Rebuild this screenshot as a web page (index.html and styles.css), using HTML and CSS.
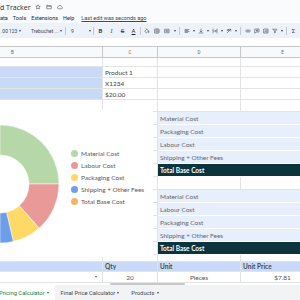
FILE: index.html
```html
<!DOCTYPE html>
<html lang="en">
<head>
<meta charset="utf-8">
<title>Tracker</title>
<link rel="stylesheet" href="styles.css">
</head>
<body>
<div class="app">
  <header class="chrome">
    <div class="titlebar">
      <span class="title">d Tracker</span>
      <svg class="ti" viewBox="0 0 24 24"><path d="M12 3l2.7 5.8 6.3.7-4.7 4.3 1.3 6.3L12 16.9 6.4 20.1l1.3-6.3L3 9.5l6.3-.7z"/></svg>
      <svg class="ti" viewBox="0 0 24 24"><path d="M3 5h6l2 2h10v12H3z M3 9h18"/></svg>
      <svg class="ti" viewBox="0 0 24 24"><path d="M7 19h10.5a4 4 0 0 0 .5-8 6.5 6.5 0 0 0-12.3-1.5A4.8 4.8 0 0 0 7 19z"/></svg>
    </div>
    <nav class="menubar">
      <span>ata</span><span>Tools</span><span>Extensions</span><span>Help</span><span class="lastedit">Last edit was seconds ago</span>
    </nav>
    <div class="toolbar">
      <span class="ic txt">.00</span>
      <span class="numfmt">123<i class="car"></i></span>
      <span class="fontname">Trebuchet ...</span><span class="dd"><i class="car"></i></span>
      <span class="sep"></span>
      <span class="ic txt">9</span><span class="dd gap"><i class="car"></i></span>
      <span class="sep tight"></span>
      <span class="ic fmt b">B</span><span class="ic fmt it">I</span><span class="ic fmt st">S</span><span class="ic fmt ac">A</span>
      <span class="sep tight"></span>
      <span class="ic w10"><svg viewBox="0 0 24 24"><path d="M4 12l7-7 7 7-7 7z M11 5L8 2 M19 14c1.5 2.5 1.5 4 0 4s-1.5-1.5 0-4z"/></svg></span>
      <span class="ic w10"><svg viewBox="0 0 24 24"><path d="M4 4h16v16H4z M12 4v16 M4 12h16"/></svg></span>
      <span class="ic w10"><svg viewBox="0 0 24 24"><path d="M4 5h16v14H4z M7 12h10 M9 10l-2 2 2 2 M15 10l2 2-2 2"/></svg></span><span class="dd"><i class="car"></i></span>
      <span class="sep"></span>
      <span class="ic"><svg viewBox="0 0 24 24"><path d="M4 6h16 M4 10h11 M4 14h16 M4 18h11"/></svg></span><span class="dd"><i class="car"></i></span>
      <span class="ic"><svg viewBox="0 0 24 24"><path d="M4 20h16 M12 4v12 M8 12l4 4 4-4"/></svg></span><span class="dd"><i class="car"></i></span>
      <span class="ic"><svg viewBox="0 0 24 24"><path d="M4 4v16 M20 4v16 M7 12h10 M14 9l3 3-3 3"/></svg></span><span class="dd"><i class="car"></i></span>
      <span class="ic"><svg viewBox="0 0 24 24"><path d="M5 19L19 5 M12 5h7v7 M5 11l4-7 4 7 M6.5 8.5h5"/></svg></span><span class="dd"><i class="car"></i></span>
      <span class="sep"></span>
      <span class="ic"><svg viewBox="0 0 24 24"><path d="M9 12h6 M10 8H7a4 4 0 0 0 0 8h3 M14 8h3a4 4 0 0 1 0 8h-3"/></svg></span>
      <span class="ic"><svg viewBox="0 0 24 24"><path d="M4 4h16v12H8l-4 4z M12 7v6 M9 10h6"/></svg></span>
      <span class="ic"><svg viewBox="0 0 24 24"><path d="M4 4h16v16H4z M8 16v-4 M12 16V8 M16 16v-6"/></svg></span>
      <span class="ic"><svg viewBox="0 0 24 24"><path d="M4 5h16l-6 7v6l-4 2v-8z"/></svg></span><span class="dd"><i class="car"></i></span>
      <span class="sep"></span>
      <span class="ic txt sigma">Σ</span>
    </div>
    <div class="formulabar"></div>
  </header>

  <main class="sheet">
    <div class="cols colheads"><span>B</span><span>C</span><span>D</span><span>E</span></div>

    <div class="cols row h9"><div class="c"></div><div class="c"></div><div class="c"></div><div class="c"></div></div>
    <div class="cols row h11"><div class="c blue"></div><div class="c">Product 1</div><div class="c"></div><div class="c"></div></div>
    <div class="cols row h11"><div class="c blue"></div><div class="c">X1234</div><div class="c"></div><div class="c"></div></div>
    <div class="cols row h11"><div class="c blue"></div><div class="c">$20.00</div><div class="c"></div><div class="c"></div></div>
    <div class="cols row h12"><div class="c"></div><div class="c"></div><div class="c"></div><div class="c"></div></div>

    <div class="cols row h13"><div class="c"></div><div class="c"></div><div class="c tbl">Material Cost</div></div>
    <div class="cols row h13"><div class="c"></div><div class="c"></div><div class="c tbl">Packaging Cost</div></div>
    <div class="cols row h13"><div class="c"></div><div class="c"></div><div class="c tbl">Labour Cost</div></div>
    <div class="cols row h13"><div class="c"></div><div class="c"></div><div class="c tbl">Shipping + Other Fees</div></div>
    <div class="cols row h13"><div class="c"></div><div class="c"></div><div class="c tbl tot">Total Base Cost</div></div>
    <div class="cols row h13"><div class="c"></div><div class="c"></div><div class="c"></div><div class="c"></div></div>
    <div class="cols row h13"><div class="c"></div><div class="c"></div><div class="c tbl">Material Cost</div></div>
    <div class="cols row h13"><div class="c"></div><div class="c"></div><div class="c tbl">Labour Cost</div></div>
    <div class="cols row h13"><div class="c"></div><div class="c"></div><div class="c tbl">Packaging Cost</div></div>
    <div class="cols row h13"><div class="c"></div><div class="c"></div><div class="c tbl">Shipping + Other Fees</div></div>
    <div class="cols row h13"><div class="c"></div><div class="c"></div><div class="c tbl tot">Total Base Cost</div></div>
    <div class="cols row h7"><div class="c"></div><div class="c"></div><div class="c"></div><div class="c"></div></div>

    <div class="cols row h10 hdr"><div class="c"></div><div class="c">Qty</div><div class="c">Unit</div><div class="c">Unit Price</div></div>
    <div class="cols row h11"><div class="c end"><i class="car dark"></i></div><div class="c ctr">20</div><div class="c ctr">Pieces</div><div class="c ctr">$7.81</div></div>

    <div class="chart">
      <svg class="donut" viewBox="-10 110 80 147">
        <path fill="#f6b26b" d="M0 243A59 59 0 0 1 0 125L0 155A29 29 0 0 0 0 213Z"/>
        <path fill="#b6d7a8" d="M0 125A59 59 0 0 1 59 184L29 184A29 29 0 0 0 0 155Z"/>
        <path fill="#ea9999" d="M59 184A59 59 0 0 1 39.1 228.2L19.2 205.7A29 29 0 0 0 29 184Z"/>
        <path fill="#ffd966" d="M39.1 228.2A59 59 0 0 1 13.3 241.5L6.5 212.3A29 29 0 0 0 19.2 205.7Z"/>
        <path fill="#6d9eeb" d="M13.3 241.5A59 59 0 0 1 0 243L0 213A29 29 0 0 0 6.5 212.3Z"/>
      </svg>
      <ul class="legend">
        <li><span class="dot green"></span>Material Cost</li>
        <li><span class="dot red"></span>Labour Cost</li>
        <li><span class="dot yellow"></span>Packaging Cost</li>
        <li><span class="dot blue-d"></span>Shipping + Other Fees</li>
        <li><span class="dot orange"></span>Total Base Cost</li>
      </ul>
    </div>
  </main>

  <div class="hscroll"><div class="thumb"></div></div>

  <footer class="tabs">
    <span class="tab active">Pricing Calculator <i class="car green-car"></i></span>
    <span class="tab">Final Price Calculator <i class="car"></i></span>
    <span class="tab">Products <i class="car"></i></span>
  </footer>
</div>
</body>
</html>
```

FILE: styles.css
```css
* { box-sizing: border-box; margin: 0; padding: 0; }
html, body { width: 300px; height: 300px; overflow: hidden; background: #fff; }
body { font-family: Roboto, "Liberation Sans", sans-serif; color: #1f1f1f; }

.app { width: 300px; height: 300px; display: flex; flex-direction: column; overflow: hidden; }

/* ---------- top chrome ---------- */
.chrome { background: #f9fbfd; flex: none; }
.titlebar { height: 13px; display: flex; align-items: center; padding-top: 1px; }
.title { font-family: "Open Sans", sans-serif; font-size: 7px; color: #1f1f1f; margin-right: 4px; white-space: nowrap; }
.ti { width: 6px; height: 6px; margin-right: 5px; fill: none; stroke: #444746; stroke-width: 2.2; stroke-linejoin: round; }

.menubar { height: 10px; display: flex; align-items: center; gap: 5px; font-size: 5.5px; color: #1f1f1f; white-space: nowrap; }
.lastedit { margin-left: 2px; color: #444746; text-decoration: underline; }

.toolbar { height: 15px; display: flex; align-items: center; background: #edf2fa; font-size: 5.5px; color: #444746; white-space: nowrap; }
.ic { width: 9px; height: 9px; display: flex; align-items: center; justify-content: center; flex: none; }
.ic svg { width: 6px; height: 6px; fill: none; stroke: #444746; stroke-width: 2.2; stroke-linejoin: round; stroke-linecap: round; }
.w10 { width: 10px; }
.txt { font-size: 5px; }
.sigma { font-size: 6px; }
.fmt { width: 11px; font-size: 6px; color: #444746; }
.b { font-weight: 700; }
.it { font-style: italic; font-family: "Liberation Serif", serif; }
.st { text-decoration: line-through; }
.ac { text-decoration: underline; text-decoration-thickness: 1px; color: #1f1f1f; }
.numfmt { width: 14px; display: flex; align-items: center; gap: 2px; font-size: 5px; flex: none; }
.fontname { width: 27px; margin-left: 8px; font-size: 5px; flex: none; }
.dd { width: 5px; display: flex; align-items: center; justify-content: center; flex: none; }
.dd.gap { margin-left: 10px; }
.car { display: inline-block; width: 0; height: 0; border-left: 1.5px solid transparent; border-right: 1.5px solid transparent; border-top: 2px solid #444746; }
.sep { width: 5px; height: 8px; flex: none; display: flex; justify-content: center; }
.sep::before { content: ""; width: 1px; height: 8px; background: #c7c7c7; }
.sep.tight { width: 3px; }

.formulabar { height: 8px; background: #fff; }

/* ---------- sheet grid ---------- */
.sheet { position: relative; margin-left: -77px; width: 402px; height: 237px; flex: none; overflow: hidden; }
.cols { display: grid; grid-template-columns: 180px 55px 83px 84px; }
.colheads { height: 12px; background: #f8f9fa; border-top: 1px solid #c4c7c5; border-bottom: 1px solid #c4c7c5; font-size: 4.5px; color: #5f6368; }
.colheads span { display: flex; align-items: center; justify-content: center; border-right: 1px solid #c4c7c5; }

.row .c { display: flex; align-items: center; padding: 0 2px; border-right: 1px solid #e2e3e3; border-bottom: 1px solid #e2e3e3; font-family: Lato, "Open Sans", sans-serif; font-size: 6.5px; color: #434343; white-space: nowrap; overflow: hidden; }
.h7 { height: 7px; }
.h9 { height: 9px; }
.h10 { height: 10px; }
.h11 { height: 11px; }
.h12 { height: 12px; }
.h13 { height: 13px; }

.row .blue { background: #c9daf8; }
.row .tbl { grid-column: span 2; background: #e8effc; border-bottom-color: #fff; color: #666; }
.row .tot { background: #0c343d; color: #fff; font-weight: 700; }
.hdr .c { background: #c9daf8; font-weight: 700; color: #4a4a4a; }
.row .ctr { justify-content: center; color: #555; }
.row .end { justify-content: flex-end; padding-right: 5px; }
.car.dark { border-top-color: #5f6368; }

/* ---------- chart overlay ---------- */
.chart { position: absolute; left: 67px; top: 64px; width: 163px; height: 147px; background: #fff; display: flex; }
.donut { width: 80px; height: 147px; flex: none; }
.donut path { stroke: #fff; stroke-width: 0.5; }
.legend { list-style: none; margin-top: 37px; font-family: Lato, "Open Sans", sans-serif; font-size: 6.5px; color: #595959; }
.legend li { height: 12px; display: flex; align-items: center; gap: 3.5px; padding-left: 0.5px; white-space: nowrap; }
.dot { width: 7px; height: 7px; border-radius: 50%; flex: none; }
.green { background: #b6d7a8; }
.red { background: #ea9999; }
.yellow { background: #ffd966; }
.blue-d { background: #6d9eeb; }
.orange { background: #f6b26b; }

/* ---------- bottom ---------- */
.hscroll { height: 2px; flex: none; background: #fff; }
.thumb { margin-left: 110px; width: 75px; height: 2px; background: #c8c8c8; border-radius: 1px; }

.tabs { height: 15px; flex: none; display: flex; align-items: stretch; background: #f1f3f4; font-size: 5.8px; color: #444746; white-space: nowrap; }
.tab { display: flex; align-items: center; gap: 2px; padding: 0 6px; }
.tab.active { margin-left: -7px; background: #fff; color: #188038; }
.green-car { border-top-color: #188038; }
```
